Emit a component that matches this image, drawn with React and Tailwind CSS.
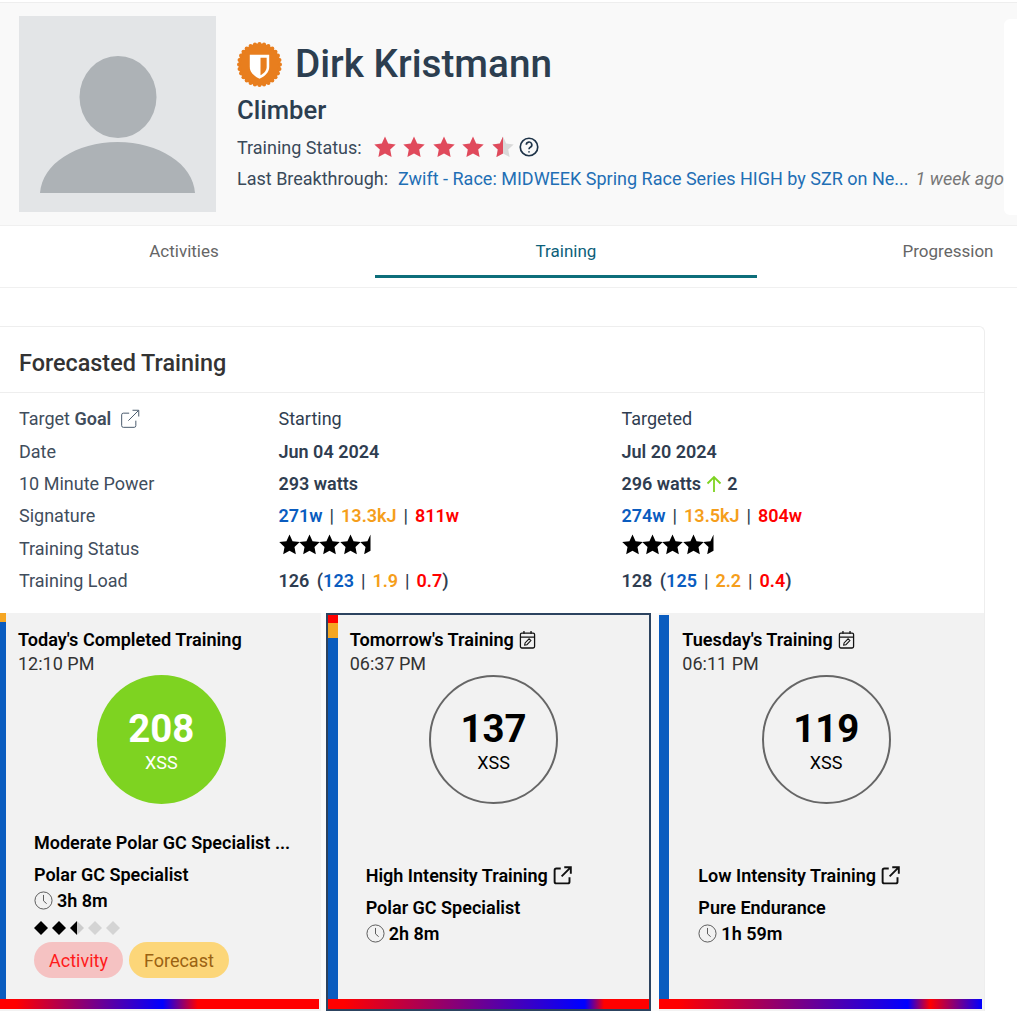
import { Fragment } from "react";

const BLUE = "text-[#0a5cbf]";
const ORANGE = "text-[#f59e1b]";
const RED = "text-[#ff0000]";

const STAR = "M12 1.6l3.2 6.9 7.5.9-5.5 5.2 1.4 7.5L12 18.4l-6.6 3.7 1.4-7.5L1.3 9.4l7.5-.9z";

function Star({ size, fill, half, rest }) {
  return (
    <svg width={size} height={size} viewBox="0 0 24 24" className="shrink-0">
      {half ? (
        <>
          {rest && <path d={STAR} fill={rest} />}
          <path d={STAR} fill={fill} style={{ clipPath: "inset(0 50% 0 0)" }} />
        </>
      ) : (
        <path d={STAR} fill={fill} />
      )}
    </svg>
  );
}

function BlackStars() {
  return (
    <div className="ml-[-1px] flex h-full items-center pb-[8px]">
      {[0, 1, 2, 3].map((i) => (
        <span key={i} className="mr-[-2.600px]">
          <Star size={23} fill="#000" />
        </span>
      ))}
      <Star size={23} fill="#000" half />
    </div>
  );
}

function Clock() {
  return (
    <svg width="19" height="19" viewBox="0 0 24 24" fill="none" stroke="#555" strokeWidth="1.2" className="shrink-0">
      <circle cx="12" cy="12" r="10.8" />
      <path d="M12 5v7.5l4 3.5" />
    </svg>
  );
}

function ExternalThick() {
  return (
    <svg width="21" height="21" viewBox="0 0 24 24" fill="none" stroke="#111" strokeWidth="2.2" className="shrink-0">
      <path d="M10 4H5a2 2 0 0 0-2 2v13a2 2 0 0 0 2 2h13a2 2 0 0 0 2-2v-5" />
      <path d="M14 2.5h7.5V10M21 3L11 13" />
    </svg>
  );
}

function ExternalThin() {
  return (
    <svg width="20" height="20" viewBox="0 0 24 24" fill="none" stroke="#4b5c6e" strokeWidth="1.2" className="shrink-0">
      <path d="M11 5H4a2 2 0 0 0-2 2v13a2 2 0 0 0 2 2h13a2 2 0 0 0 2-2v-6" />
      <path d="M15 1.5h7.5V9M22 2L10 14" />
    </svg>
  );
}

function CalendarEdit() {
  return (
    <svg width="17" height="19" viewBox="0 0 24 26" fill="none" stroke="#111" strokeWidth="1.8" className="shrink-0">
      <rect x="2" y="4" width="20" height="21" rx="2" />
      <path d="M2 9.500h20M7 1v4M17 1v4" />
      <path d="M8 21l.6-3.200 5.600-5.800 2.600 2.500-5.600 5.800z" strokeWidth="1.500" />
    </svg>
  );
}

function Diamond({ left, right }) {
  return (
    <svg width="14" height="14" viewBox="0 0 14 14" className="shrink-0">
      <path d="M7 0l7 7-7 7z" fill={right} />
      <path d="M7 0L0 7l7 7z" fill={left} />
    </svg>
  );
}

function Badge() {
  const teeth = [];
  for (let i = 0; i < 28; i++) {
    const a = (i / 28) * Math.PI * 2;
    teeth.push(<circle key={i} cx={22 + Math.cos(a) * 20} cy={22 + Math.sin(a) * 20} r="2" fill="#e87e1e" />);
  }
  return (
    <svg width="45" height="45" viewBox="0 0 44 44" className="shrink-0">
      <circle cx="22" cy="22" r="20.500" fill="#e87e1e" />
      {teeth}
      <path d="M12.500 12.500h19v12c0 5.500-4.500 9-9.500 11.500-5-2.500-9.500-6-9.500-11.500z" fill="#fff" />
      <path d="M23 15.500h6v9c0 3.500-2.500 6-6 8z" fill="#e87e1e" />
    </svg>
  );
}

function Avatar() {
  return (
    <div className="h-[196px] w-[197px] shrink-0 bg-[#e3e5e7]">
      <svg width="197" height="196" viewBox="0 0 197 196">
        <ellipse cx="99" cy="81" rx="38.500" ry="41" fill="#adb2b6" />
        <path d="M21 177c2-29 36-51 77.500-51s75.500 22 77.500 51z" fill="#adb2b6" />
      </svg>
    </div>
  );
}

function Sep() {
  return <span className="mx-[2.500px] font-medium"> | </span>;
}

function Sig({ a, b, c }) {
  return (
    <span className="font-semibold whitespace-pre">
      <span className={BLUE}>{a}</span>
      <Sep />
      <span className={ORANGE}>{b}</span>
      <Sep />
      <span className={RED}>{c}</span>
    </span>
  );
}

function Load({ total, a, b, c }) {
  return (
    <span className="font-semibold whitespace-pre">
      {total} <span className="ml-[3px]">(</span>
      <span className={BLUE}>{a}</span>
      <Sep />
      <span className={ORANGE}>{b}</span>
      <Sep />
      <span className={RED}>{c}</span>)
    </span>
  );
}

const rows = [
  {
    label: (
      <span className="flex items-center">
        Target&nbsp;<b className="font-semibold">Goal</b>
        <span className="ml-[9px]"><ExternalThin /></span>
      </span>
    ),
    start: "Starting",
    target: "Targeted",
  },
  {
    label: "Date",
    start: <b className="font-semibold">Jun 04 2024</b>,
    target: <b className="font-semibold">Jul 20 2024</b>,
  },
  {
    label: "10 Minute Power",
    start: <b className="font-semibold">293 watts</b>,
    target: (
      <b className="flex items-center font-semibold">
        296 watts
        <svg width="16" height="18" viewBox="0 0 16 18" fill="none" stroke="#7ed321" strokeWidth="1.800" className="mx-[5px]">
          <path d="M8 17V2M1.500 8.500L8 2l6.500 6.500" />
        </svg>
        2
      </b>
    ),
  },
  {
    label: "Signature",
    start: <Sig a="271w" b="13.3kJ" c="811w" />,
    target: <Sig a="274w" b="13.5kJ" c="804w" />,
  },
  { label: "Training Status", start: <BlackStars />, target: <BlackStars /> },
  {
    label: "Training Load",
    start: <Load total="126" a="123" b="1.9" c="0.7" />,
    target: <Load total="128" a="125" b="2.2" c="0.4" />,
  },
];

function Stripe({ width, segments }) {
  return (
    <div className={`flex shrink-0 flex-col ${width}`}>
      {segments}
      <div className="flex-1 bg-[#0a5cbf]" />
    </div>
  );
}

function Circle({ value, done }) {
  return (
    <div
      className={
        done
          ? "flex h-[129px] w-[129px] flex-col items-center justify-center rounded-full bg-[#7ed321] pt-[2px] text-white"
          : "flex h-[129px] w-[129px] flex-col items-center justify-center rounded-full border-2 border-[#666] pt-[2px] text-black"
      }
    >
      <div className="text-[38.400px] leading-[42px] font-bold">{value}</div>
      <div className="mt-[3px] text-[18px] leading-[20px]">XSS</div>
    </div>
  );
}

function Detail({ title, sub, time, icon, className }) {
  return (
    <div className={`text-[18px] font-semibold text-black ${className}`}>
      <div className="flex h-[22px] items-center gap-[4px] whitespace-nowrap">
        {title}
        {icon && <ExternalThick />}
      </div>
      <div className="mt-[11px] h-[22px] leading-[22px]">{sub}</div>
      <div className="mt-[3px] flex h-[22px] items-center gap-[4px]">
        <Clock />
        {time}
      </div>
    </div>
  );
}

function TrainingCard({ className, stripe, title, time, calendar, value, done, detail, bar, barClass, children, pad, circlePad }) {
  return (
    <div className={`flex h-[398px] flex-col bg-[#f2f2f2] ${className}`}>
      <div className="flex min-h-0 flex-1">
        {stripe}
        <div className={`min-w-0 flex-1 ${pad}`}>
          <div className="flex h-[22px] items-center gap-[5px] text-[18.100px] font-semibold whitespace-nowrap text-black">
            {title}
            {calendar && <CalendarEdit />}
          </div>
          <div className="h-[25px] text-[18px] leading-[28px] text-[#333]">{time}</div>
          <div className={`flex justify-center ${circlePad}`}>
            <Circle value={value} done={done} />
          </div>
          {detail}
          {children}
        </div>
      </div>
      <div className={`h-[10px] shrink-0 ${bar} ${barClass}`} />
    </div>
  );
}

export default function App() {
  return (
    <div className="h-[1024px] w-[1017px] overflow-hidden bg-white font-['Roboto',sans-serif] text-[#2c3e50]">
      <div className="h-[3px] border-b border-[#eeeeee] bg-white" />

      <div className="flex h-[222px] bg-[#f9f9f9] pt-[13px] pl-[19px]">
        <Avatar />
        <div className="min-w-0 flex-1 pt-[25px] pl-[21px]">
          <div className="flex h-[46px] items-center gap-[13px]">
            <Badge />
            <div className="text-[38.700px] leading-[46px] font-medium whitespace-nowrap">Dirk Kristmann</div>
          </div>
          <div className="mt-[8px] text-[25.600px] leading-[30px] font-medium">Climber</div>
          <div className="mt-[8px] flex h-[28px] items-center text-[18px] text-[#3a4a5a]">
            Training Status:
            <div className="ml-[11px] flex items-center gap-[5.500px]">
              {[0, 1, 2, 3].map((i) => (
                <Star key={i} size={24} fill="#e04a5c" />
              ))}
              <Star size={24} fill="#e04a5c" half rest="#d9d9d9" />
            </div>
            <svg width="20" height="20" viewBox="0 0 24 24" fill="none" stroke="#1e3348" strokeWidth="2" className="ml-[4px]">
              <circle cx="12" cy="12" r="10.500" />
              <path d="M8.800 9.300a3.300 3.300 0 1 1 4.800 3c-1 .6-1.600 1.200-1.600 2.400" />
              <path d="M12 17.200v1.300" />
            </svg>
          </div>
          <div className="mt-[3px] flex h-[28px] items-center text-[18px] whitespace-nowrap text-[#3a4a5a]">
            Last Breakthrough:
            <span className="ml-[10px] text-[#1f6fb5]">Zwift - Race: MIDWEEK Spring Race Series HIGH by SZR on Ne...</span>
            <span className="ml-[7px] text-[#777] italic">1 week ago</span>
          </div>
        </div>
        <div className="mt-[3px] h-[196px] w-[13px] shrink-0 rounded-l-md bg-white" />
      </div>

      <div className="ml-[-7px] grid h-[63px] w-[1146px] grid-cols-3 border-y border-[#f0f0f0] text-center text-[17px] text-[#666]">
        <div className="pt-[13px]">Activities</div>
        <div className="mb-[9px] h-[52px] border-b-[3px] border-[#0d6e7a] pt-[13px] text-[#0d5f7a]">Training</div>
        <div className="pt-[13px]">Progression</div>
      </div>

      <div className="mt-[38px] ml-[-1px] w-[986px] rounded-tr-md border-t border-r border-[#eeeeee]">
        <div className="flex h-[66px] items-center border-b border-[#eeeeee] pt-[8px] pl-[20px] text-[23.400px] font-medium text-[#333]">
          Forecasted Training
        </div>
        <div className="grid grid-cols-[259.500px_343px_1fr] pt-[9.600px] pb-[16.400px] pl-[20px] text-[18px] text-[#2f3d50]">
          {rows.map((r, i) => (
            <Fragment key={i}>
              <div className="flex h-[32.400px] items-center text-[#3f4d5c]">{r.label}</div>
              <div className="flex h-[32.400px] items-center">{r.start}</div>
              <div className="flex h-[32.400px] items-center">{r.target}</div>
            </Fragment>
          ))}
        </div>
        <div className="flex h-[398px] bg-[#fbfbfb] pl-px">
          <TrainingCard
            className="mr-[5px] w-[321px]"
            pad="pl-[12px] pt-[15px]"
            circlePad="pr-[16px]"
            stripe={<Stripe width="w-[6px]" segments={<div className="h-[9px] bg-[#f5a623]" />} />}
            title="Today's Completed Training"
            time="12:10 PM"
            value="208"
            done
            bar="w-[319px]"
            barClass="mb-[2px] bg-[linear-gradient(90deg,#f00_0,#f00_5%,#00f_51%,#f00_62%,#f00_100%)]"
            detail={
              <Detail
                className="mt-[27px] ml-[16px] w-[260px]"
                title="Moderate Polar GC Specialist ..."
                sub="Polar GC Specialist"
                time="3h 8m"
              />
            }
          >
            <div className="mt-[10px] ml-[16px] flex gap-[4px]">
              <Diamond left="#000" right="#000" />
              <Diamond left="#000" right="#000" />
              <Diamond left="#000" right="#ccc" />
              <Diamond left="#d4d4d4" right="#d4d4d4" />
              <Diamond left="#d4d4d4" right="#d4d4d4" />
            </div>
            <div className="mt-[7px] ml-[16px] flex gap-[6px] text-[18px]">
              <span className="flex h-[36px] items-center rounded-full bg-[#f5c2c2] px-[15px] text-[#ff1a1a]">Activity</span>
              <span className="flex h-[36px] items-center rounded-full bg-[#fcd679] px-[15px] text-[#9a6212]">Forecast</span>
            </div>
          </TrainingCard>

          <TrainingCard
            className="mr-[8px] w-[326px] border-2 border-[#2c4360]"
            pad="pl-[12px] pt-[13px]"
            circlePad="pr-[12px]"
            stripe={
              <Stripe
                width="w-[10px]"
                segments={
                  <>
                    <div className="h-[8px] bg-[#ff0000]" />
                    <div className="h-[15px] bg-[#f5a623]" />
                  </>
                }
              />
            }
            title="Tomorrow's Training"
            calendar
            time="06:37 PM"
            value="137"
            bar="w-full"
            barClass="bg-[linear-gradient(90deg,#f00_0,#f00_5%,#00f_79%,#00f_80%,#f00_86%,#f00_100%)]"
            detail={
              <Detail
                className="mt-[60px] ml-[16px]"
                icon
                title="High Intensity Training"
                sub="Polar GC Specialist"
                time="2h 8m"
              />
            }
          />

          <TrainingCard
            className="w-[325px]"
            pad="pl-[13px] pt-[15px]"
            circlePad="pr-[14px]"
            stripe={<Stripe width="w-[10px]" segments={<div className="h-[2px] bg-[#f2f2f2]" />} />}
            title="Tuesday's Training"
            calendar
            time="06:11 PM"
            value="119"
            bar="w-[323px]"
            barClass="mb-[2px] bg-[linear-gradient(90deg,#f00_0,#f00_6%,#00f_77%,#f00_84%,#00f_100%)]"
            detail={
              <Detail
                className="mt-[60px] ml-[16px]"
                icon
                title="Low Intensity Training"
                sub="Pure Endurance"
                time="1h 59m"
              />
            }
          />
        </div>
      </div>
    </div>
  );
}
